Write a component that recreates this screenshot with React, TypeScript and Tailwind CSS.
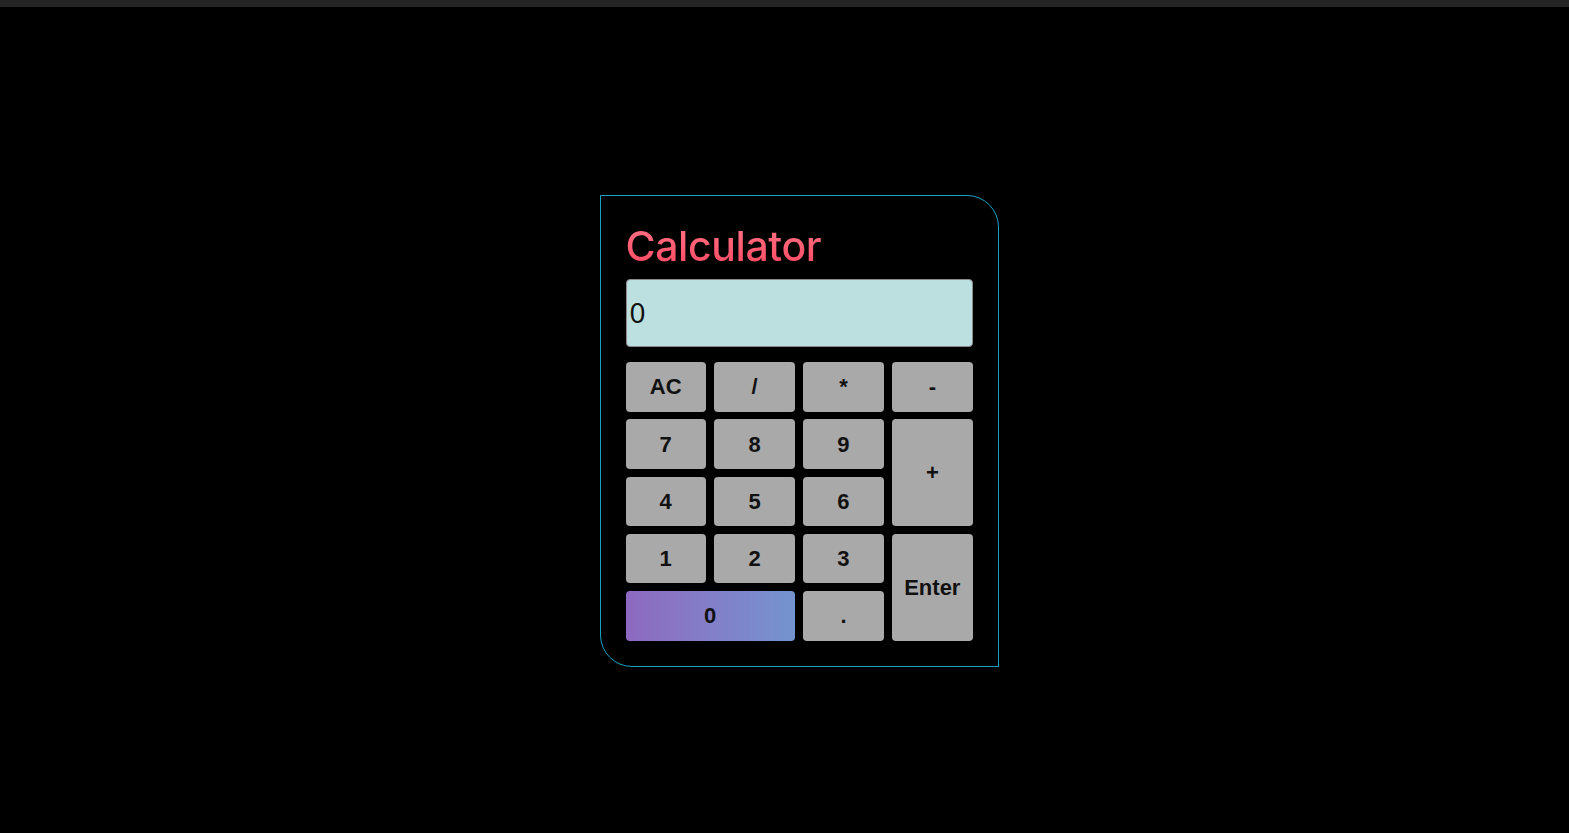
import React from "react";

const Key = ({ label, className = "" }: { label: string; className?: string }) => (
  <button
    className={
      "flex items-center justify-center rounded-[4px] bg-[#a9a9a9] text-[22px] font-bold text-[#111] " +
      className
    }
    style={{ fontFamily: '"Liberation Sans", Arial, sans-serif' }}
  >
    {label}
  </button>
);

export default function App() {
  return (
    <div className="min-h-[833px] w-full bg-black">
      <div className="h-[7px] w-full bg-[#242424]" />
      <div className="flex justify-center pl-[29px] pt-[188px]">
        <div className="w-[399px] rounded-tr-[32px] rounded-bl-[32px] border border-[#17a2c4] px-[25px] pb-[25px]">
          <h1
            className="mt-[26px] h-[57px] bg-gradient-to-b from-[#ff7385] to-[#ff3a5c] bg-clip-text text-[41px] font-medium leading-[48px] text-transparent"
            style={{ fontFamily: 'Inter, "Noto Sans", sans-serif', letterSpacing: "-0.4px" }}
          >
            Calculator
          </h1>
          <div
            className="flex h-[68px] items-center rounded-[4px] border border-[#8a8a8a] bg-[#bce0e0] px-[3px] pb-[2px] text-[28px] text-[#111]"
            style={{ fontFamily: '"Noto Sans", Arial, sans-serif' }}
          >
            0
          </div>
          <div className="mt-[15px] grid grid-cols-4 grid-rows-[repeat(5,49.5px)] gap-x-[8.5px] gap-y-[7.75px]">
            <Key label="AC" />
            <Key label="/" />
            <Key label="*" />
            <Key label="-" />
            <Key label="7" />
            <Key label="8" />
            <Key label="9" />
            <Key label="+" className="row-span-2" />
            <Key label="4" />
            <Key label="5" />
            <Key label="6" />
            <Key label="1" />
            <Key label="2" />
            <Key label="3" />
            <Key label="Enter" className="row-span-2" />
            <button
              className="col-span-2 flex items-center justify-center rounded-[4px] bg-gradient-to-r from-[#8d69bf] to-[#7393cf] text-[22px] font-bold text-[#111]"
              style={{ fontFamily: '"Liberation Sans", Arial, sans-serif' }}
            >
              0
            </button>
            <Key label="." />
          </div>
        </div>
      </div>
    </div>
  );
}
